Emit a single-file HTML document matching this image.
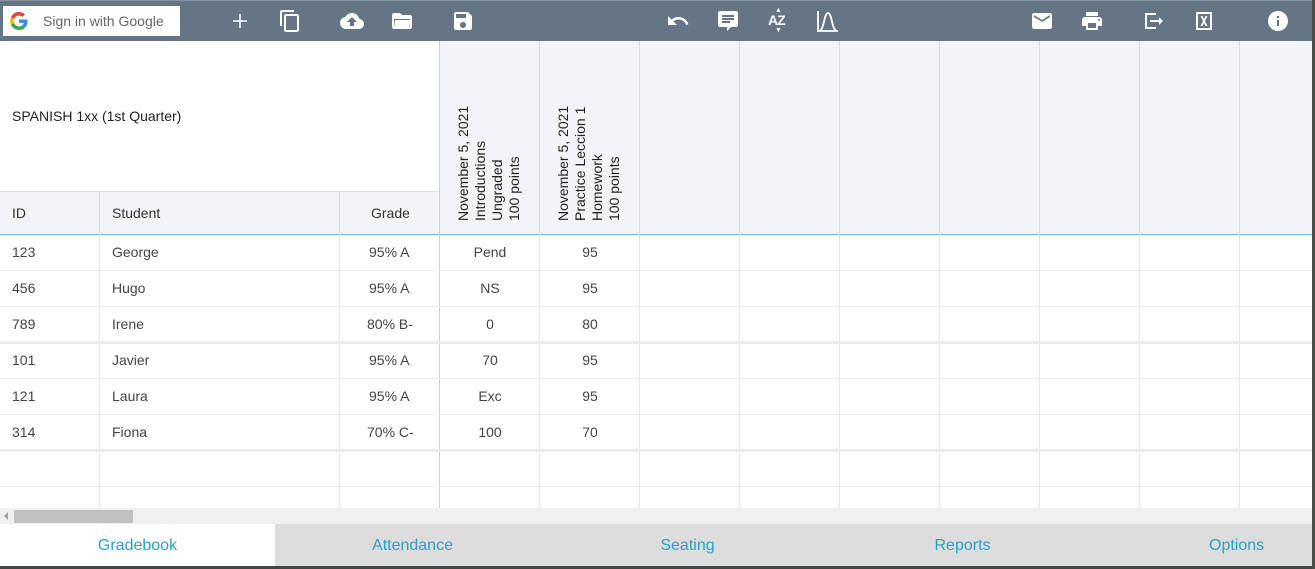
<!DOCTYPE html>
<html><head><meta charset="utf-8"><style>
*{box-sizing:border-box;margin:0;padding:0}
body{width:1315px;height:569px;overflow:hidden;background:#fff;font-family:"Liberation Sans",sans-serif;position:relative;color:#333}
.a{position:absolute}
.tb{left:0;top:0;width:1315px;height:41px;background:#667585;border-top:1px solid #8a96a3}
.ic{position:absolute;top:9px;width:24px;height:24px;fill:#fff}
.v{position:absolute;width:1px;background:#e6e6e6}
.h{position:absolute;height:1px;background:#ececec;left:0;width:1312px}
.t{position:absolute;font-size:14px;color:#444;line-height:14px}
.rot{position:absolute;transform:rotate(-90deg);transform-origin:0 0;font-size:14px;line-height:17px;color:#222;white-space:nowrap}
.tab{position:absolute;top:524px;height:42px;line-height:44px;text-align:center;font-size:16px;color:#2b9fc6;background:#dddddd}
</style></head><body>
<div class="a tb"></div>
<div class="a" style="left:3px;top:6px;width:177px;height:30px;background:#fff"></div>
<svg class="a" style="left:10px;top:12px" width="18" height="18" viewBox="0 0 48 48"><path fill="#EA4335" d="M24 9.5c3.54 0 6.71 1.220 9.21 3.6l6.85-6.85C35.9 2.38 30.47 0 24 0 14.62 0 6.51 5.38 2.56 13.22l7.98 6.19C12.43 13.72 17.74 9.5 24 9.5z"/><path fill="#4285F4" d="M46.98 24.55c0-1.57-.15-3.09-.38-4.55H24v9.02h12.94c-.58 2.96-2.26 5.48-4.78 7.18l7.730 6c4.51-4.18 7.09-10.36 7.09-17.65z"/><path fill="#FBBC05" d="M10.53 28.59c-.48-1.45-.76-2.99-.76-4.59s.27-3.14.76-4.59l-7.98-6.19C.92 16.46 0 20.12 0 24c0 3.88.92 7.54 2.56 10.78l7.97-6.19z"/><path fill="#34A853" d="M24 48c6.48 0 11.93-2.13 15.89-5.81l-7.73-6c-2.15 1.45-4.92 2.3-8.16 2.3-6.26 0-11.57-4.22-13.47-9.91l-7.98 6.19C6.51 42.62 14.62 48 24 48z"/></svg>
<div class="a" style="left:43px;top:13px;font-size:14px;color:#666">Sign in with Google</div>
<svg class="ic" style="left:228px" viewBox="0 0 24 24"><path d="M19 12.8h-6.2V19h-1.6v-6.2H5v-1.6h6.2V5h1.6v6.2H19z"/></svg>
<svg class="ic" style="left:278px" viewBox="0 0 24 24"><path d="M16 1H4c-1.1 0-2 .9-2 2v14h2V3h12V1zm3 4H8c-1.1 0-2 .9-2 2v14c0 1.1.9 2 2 2h11c1.1 0 2-.9 2-2V7c0-1.1-.9-2-2-2zm0 16H8V7h11v14z"/></svg>
<svg class="ic" style="left:340px" viewBox="0 0 24 24"><path d="M19.35 10.04C18.67 6.59 15.64 4 12 4 9.11 4 6.6 5.64 5.35 8.04 2.34 8.36 0 10.91 0 14c0 3.31 2.69 6 6 6h13c2.76 0 5-2.24 5-5 0-2.64-2.05-4.78-4.65-4.96zM14 13v4h-4v-4H7l5-5 5 5h-3z"/></svg>
<svg class="ic" style="left:390px" viewBox="0 0 24 24"><path d="M20 6h-8l-2-2H4c-1.1 0-2 .9-2 2v12c0 1.1.9 2 2 2h16c1.1 0 2-.9 2-2V8c0-1.1-.9-2-2-2zM4 10v8h16v-8z" fill-rule="evenodd"/><path d="M5 11h16l-2 8H4z"/></svg>
<svg class="ic" style="left:451px" viewBox="0 0 24 24"><path d="M17 3H5c-1.11 0-2 .9-2 2v14c0 1.1.89 2 2 2h14c1.1 0 2-.9 2-2V7l-4-4zm-5 16c-1.66 0-3-1.34-3-3s1.34-3 3-3 3 1.34 3 3-1.34 3-3 3zm3-10H5V5h10v4z"/></svg>
<svg class="ic" style="left:666px" viewBox="0 0 24 24"><path d="M12.5 8c-2.65 0-5.05.99-6.9 2.6L2 7v9h9l-3.62-3.62c1.39-1.16 3.16-1.88 5.12-1.88 3.54 0 6.55 2.31 7.6 5.5l2.37-.78C21.08 11.03 17.15 8 12.5 8z"/></svg>
<svg class="ic" style="left:716px" viewBox="0 0 24 24"><path d="M20 2H4c-1.1 0-2 .9-2 2v12c0 1.1.9 2 2 2h7v4l4-4h5c1.1 0 2-.9 2-2V4c0-1.1-.9-2-2-2zM6 9h12v2H6V9zm8 5H6v-2h8v2zm4-6H6V6h12v2z"/></svg>
<div class="a" style="left:768px;top:12px;font-size:14px;font-weight:bold;color:#fff;letter-spacing:-1px">AZ</div>
<div class="a" style="left:775px;top:7px;font-size:7px;color:#fff">▲</div>
<div class="a" style="left:775px;top:27px;font-size:7px;color:#fff">▼</div>
<svg class="ic" style="left:816px" viewBox="0 0 24 24"><path d="M2 2v20h20" fill="none" stroke="#fff" stroke-width="1.8"/><path d="M4 21C8 21 8 4 12 4s4 17 8 17" fill="none" stroke="#fff" stroke-width="1.8"/></svg>
<svg class="ic" style="left:1030px" viewBox="0 0 24 24"><path d="M20 4H4c-1.1 0-2 .9-2 2v12c0 1.1.9 2 2 2h16c1.1 0 2-.9 2-2V6c0-1.1-.9-2-2-2zm0 4l-8 5-8-5V6l8 5 8-5v2z"/></svg>
<svg class="ic" style="left:1080px" viewBox="0 0 24 24"><path d="M19 8H5c-1.66 0-3 1.34-3 3v6h4v4h12v-4h4v-6c0-1.66-1.34-3-3-3zm-3 11H8v-5h8v5zm3-7c-.55 0-1-.45-1-1s.45-1 1-1 1 .45 1 1-.45 1-1 1zm-1-9H6v4h12V3z"/></svg>
<svg class="ic" style="left:1141px" viewBox="0 0 24 24"><path d="M15 4H4v16h11v-2H6V6h9z"/><path d="M9 11h9V8l4 4-4 4v-3H9z"/></svg>
<svg class="ic" style="left:1192px" viewBox="0 0 24 24"><path d="M4 3h16v18H4zM6 5v14h12V5z"/><path d="M8.5 7h2l1.5 3 1.5-3h2l-2.5 5 2.5 5h-2L12 14l-1.5 3h-2l2.5-5z"/></svg>
<svg class="ic" style="left:1266px" viewBox="0 0 24 24"><path d="M12 2C6.48 2 2 6.48 2 12s4.48 10 10 10 10-4.48 10-10S17.52 2 12 2zm1 15h-2v-6h2v6zm0-8h-2V7h2v2z"/></svg>

<div class="a" style="left:440px;top:41px;width:872px;height:194px;background:#f3f4f7"></div>
<div class="a" style="left:0;top:191px;width:440px;height:44px;background:#f3f4f7;border-top:1px solid #e0e0e4"></div>
<div class="t" style="left:12px;top:109px;color:#222">SPANISH 1xx (1st Quarter)</div>
<div class="t" style="left:12px;top:206px;color:#333">ID</div>
<div class="t" style="left:112px;top:206px;color:#333">Student</div>
<div class="t" style="left:371px;top:206px;color:#333">Grade</div>
<div class="rot" style="left:455px;top:221px">November 5, 2021<br>Introductions<br>Ungraded<br>100 points</div>
<div class="rot" style="left:555px;top:221px">November 5, 2021<br>Practice Leccion 1<br>Homework<br>100 points</div>
<div class="a" style="left:0;top:234px;width:1312px;height:1px;background:#5bc8e6"></div>

<div class="v" style="left:99px;top:191px;height:44px;background:#dcdce0"></div>
<div class="v" style="left:339px;top:191px;height:44px;background:#dcdce0"></div>
<div class="v" style="left:439px;top:41px;height:467px;background:#cfcfd3"></div>
<div class="v" style="left:539px;top:41px;height:194px;background:#dcdce0"></div>
<div class="v" style="left:639px;top:41px;height:194px;background:#dcdce0"></div>
<div class="v" style="left:739px;top:41px;height:194px;background:#dcdce0"></div>
<div class="v" style="left:839px;top:41px;height:194px;background:#dcdce0"></div>
<div class="v" style="left:939px;top:41px;height:194px;background:#dcdce0"></div>
<div class="v" style="left:1039px;top:41px;height:194px;background:#dcdce0"></div>
<div class="v" style="left:1139px;top:41px;height:194px;background:#dcdce0"></div>
<div class="v" style="left:1239px;top:41px;height:194px;background:#dcdce0"></div>
<div class="v" style="left:99px;top:235px;height:273px"></div>
<div class="v" style="left:339px;top:235px;height:273px"></div>
<div class="v" style="left:539px;top:235px;height:273px"></div>
<div class="v" style="left:639px;top:235px;height:273px"></div>
<div class="v" style="left:739px;top:235px;height:273px"></div>
<div class="v" style="left:839px;top:235px;height:273px"></div>
<div class="v" style="left:939px;top:235px;height:273px"></div>
<div class="v" style="left:1039px;top:235px;height:273px"></div>
<div class="v" style="left:1139px;top:235px;height:273px"></div>
<div class="v" style="left:1239px;top:235px;height:273px"></div>
<div class="h" style="top:270px"></div>
<div class="h" style="top:306px"></div>
<div class="h" style="top:341px;height:3px"></div>
<div class="h" style="top:378px"></div>
<div class="h" style="top:414px"></div>
<div class="h" style="top:449px;height:3px"></div>
<div class="h" style="top:486px"></div>

<div class="t" style="left:12px;top:245px">123</div><div class="t" style="left:112px;top:245px">George</div><div class="t" style="left:369px;top:245px">95% A</div><div class="t" style="left:440px;width:100px;text-align:center;top:245px">Pend</div><div class="t" style="left:540px;width:100px;text-align:center;top:245px">95</div>
<div class="t" style="left:12px;top:281px">456</div><div class="t" style="left:112px;top:281px">Hugo</div><div class="t" style="left:369px;top:281px">95% A</div><div class="t" style="left:440px;width:100px;text-align:center;top:281px">NS</div><div class="t" style="left:540px;width:100px;text-align:center;top:281px">95</div>
<div class="t" style="left:12px;top:317px">789</div><div class="t" style="left:112px;top:317px">Irene</div><div class="t" style="left:367px;top:317px">80% B-</div><div class="t" style="left:440px;width:100px;text-align:center;top:317px">0</div><div class="t" style="left:540px;width:100px;text-align:center;top:317px">80</div>
<div class="t" style="left:12px;top:353px">101</div><div class="t" style="left:112px;top:353px">Javier</div><div class="t" style="left:369px;top:353px">95% A</div><div class="t" style="left:440px;width:100px;text-align:center;top:353px">70</div><div class="t" style="left:540px;width:100px;text-align:center;top:353px">95</div>
<div class="t" style="left:12px;top:389px">121</div><div class="t" style="left:112px;top:389px">Laura</div><div class="t" style="left:369px;top:389px">95% A</div><div class="t" style="left:440px;width:100px;text-align:center;top:389px">Exc</div><div class="t" style="left:540px;width:100px;text-align:center;top:389px">95</div>
<div class="t" style="left:12px;top:425px">314</div><div class="t" style="left:112px;top:425px">Fiona</div><div class="t" style="left:367px;top:425px">70% C-</div><div class="t" style="left:440px;width:100px;text-align:center;top:425px">100</div><div class="t" style="left:540px;width:100px;text-align:center;top:425px">70</div>

<div class="a" style="left:0;top:508px;width:1312px;height:16px;background:#f0f0f0"></div>
<div class="a" style="left:4px;top:512px;width:0;height:0;border-top:4px solid transparent;border-bottom:4px solid transparent;border-right:4px solid #a0a0a0"></div>
<div class="a" style="left:14px;top:510px;width:119px;height:13px;background:#c1c1c1"></div>

<div class="tab" style="left:0;width:275px;background:#fff">Gradebook</div>
<div class="tab" style="left:275px;width:275px">Attendance</div>
<div class="tab" style="left:550px;width:275px">Seating</div>
<div class="tab" style="left:825px;width:275px">Reports</div>
<div class="tab" style="left:1100px;width:212px;text-align:left;padding-left:109px">Options</div>
<div class="a" style="left:0;top:566px;width:1315px;height:3px;background:#3f4840"></div>
<div class="a" style="left:1312px;top:0;width:3px;height:569px;background:#485048"></div>
</body></html>
